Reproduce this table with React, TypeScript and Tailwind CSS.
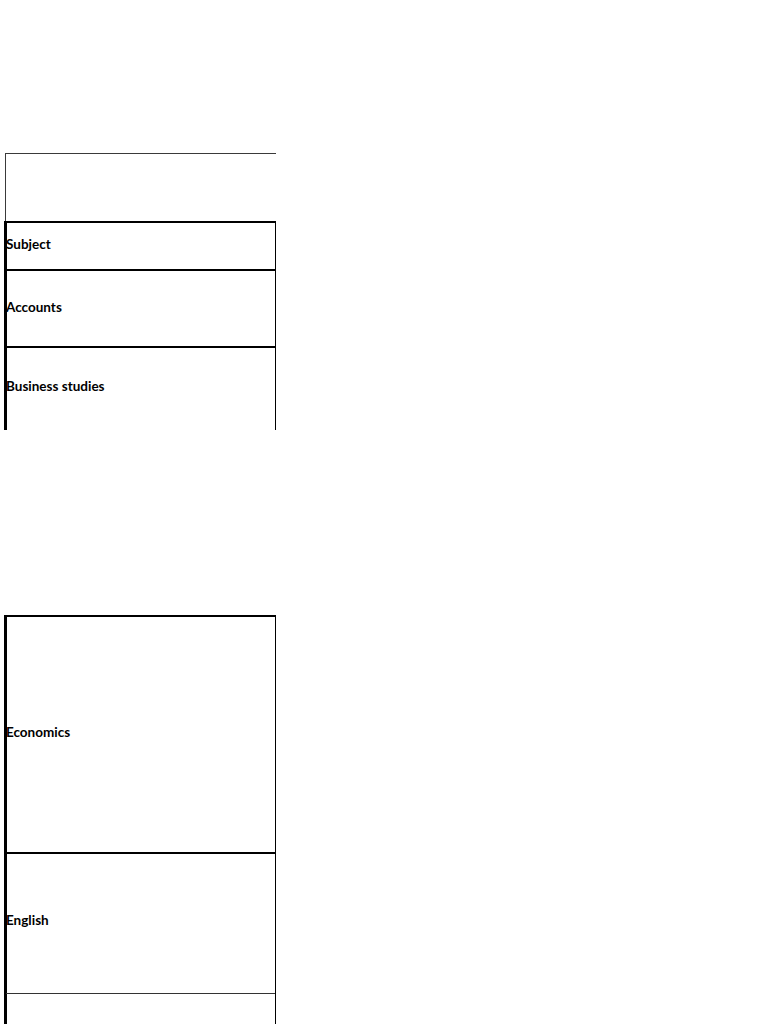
import React from "react";

const font = { fontFamily: "Lato, 'Open Sans', sans-serif" };

export default function App() {
  return (
    <div className="w-[768px] h-[1024px] bg-white overflow-hidden" style={font}>
      <div className="h-[153px]" />
      {/* Block 1 */}
      <div className="ml-[4px] w-[272px] h-[277px] overflow-hidden flex flex-col">
        <div className="ml-px h-[68px] border-t border-l border-[#3a3a3a]" />
        <div className="flex flex-col border-t-2 border-l-[3px] border-r border-black">
          <div className="h-[48px] border-b-2 border-black flex items-center pb-[2px] -ml-px text-[13.5px] font-bold text-black leading-none">
            Subject
          </div>
          <div className="h-[77px] border-b-2 border-black flex items-center pb-[2px] -ml-px text-[13.5px] font-bold text-black leading-none">
            Accounts
          </div>
          <div className="h-[82px] flex items-center pb-[4px] -ml-px text-[13.5px] font-bold text-black leading-none">
            Business studies
          </div>
        </div>
      </div>
      <div className="h-[185px]" />
      {/* Block 2 */}
      <div className="ml-[4px] w-[272px] flex flex-col border-t-2 border-l-[3px] border-r border-black">
        <div className="h-[237px] border-b-2 border-black flex items-center pb-[4px] -ml-px text-[13.5px] font-bold text-black leading-none">
          Economics
        </div>
        <div className="h-[140px] border-b border-[#333] flex items-center pb-[5px] -ml-px text-[13.5px] font-bold text-black leading-none">
          English
        </div>
        <div className="h-[120px]" />
      </div>
    </div>
  );
}
